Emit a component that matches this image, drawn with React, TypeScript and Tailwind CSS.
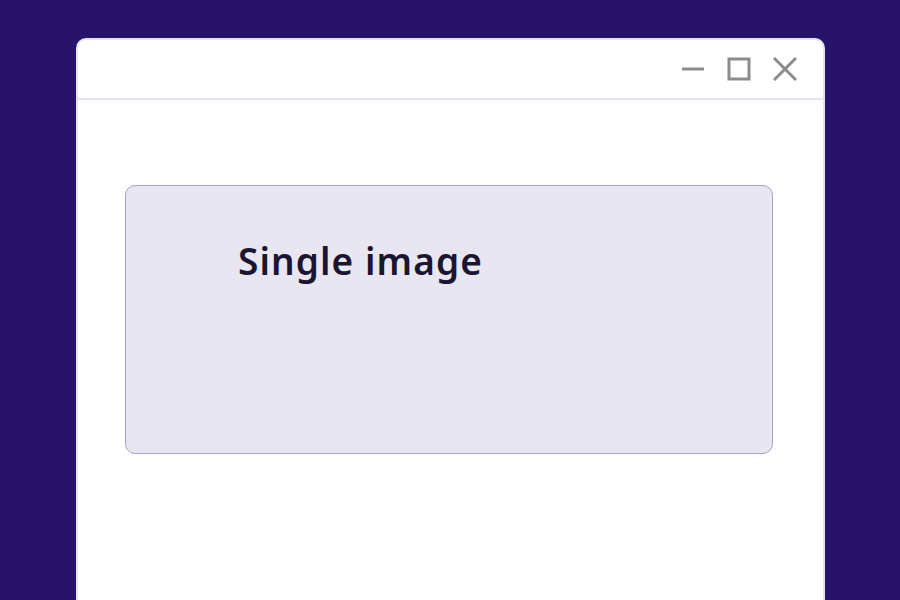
export default function App() {
  return (
    <div className="h-[600px] w-[900px] overflow-hidden bg-[#27146a] pt-[38px] pl-[76px]">
      <div className="h-[600px] w-[749px] rounded-t-[10px] border-2 border-b-0 border-[#e6e3f0] bg-white">
        <div className="flex h-[60px] items-center justify-end gap-[22px] border-b-2 border-[#e6e3f0] pr-[26px]">
          <svg viewBox="0 0 24 24" className="h-[24px] w-[24px]" fill="none" stroke="#8c8c8c" strokeWidth="3">
            <path d="M1 12h22" />
          </svg>
          <svg viewBox="0 0 24 24" className="h-[24px] w-[24px]" fill="none" stroke="#8c8c8c" strokeWidth="3">
            <rect x="2" y="2" width="20" height="20" />
          </svg>
          <svg viewBox="0 0 24 24" className="h-[24px] w-[24px]" fill="none" stroke="#8c8c8c" strokeWidth="3">
            <path d="M1 1l22 22M23 1L1 23" />
          </svg>
        </div>
        <div className="pt-[85px] pl-[47px]">
          <div className="h-[269px] w-[648px] rounded-[10px] border border-[#a9a3cb] bg-[#e8e6f1] pt-[56px] pl-[112px]">
            <div className="font-['Noto_Sans',sans-serif] text-[37px] font-semibold leading-none tracking-[1.1px] text-[#1a1530]">
              Single image
            </div>
          </div>
        </div>
      </div>
    </div>
  );
}
